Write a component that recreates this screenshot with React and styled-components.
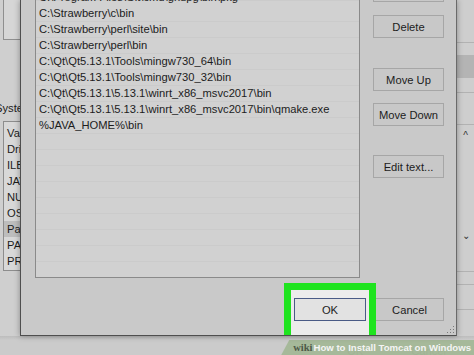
import React from "react";
import styled, { createGlobalStyle } from "styled-components";

const GlobalStyle = createGlobalStyle`
  html, body {
    margin: 0;
    padding: 0;
    overflow: hidden;
    background: #cdcdcd;
  }
  body {
    font-family: "Liberation Sans", Arial, sans-serif;
  }
`;

const Screen = styled.div`
  position: relative;
  width: 474px;
  height: 355px;
  overflow: hidden;
  display: flex;
  flex-direction: column;
  background: #cdcdcd;
  color: #1c1c1c;
  font-size: 11.2px;
`;

const Desk = styled.div`
  display: flex;
  height: 336px;
`;

const LeftPane = styled.div`
  width: 20px;
  flex: none;
  overflow: hidden;
  background: #cfcfcf;
  display: flex;
  flex-direction: column;
  padding-left: 3px;
  box-sizing: border-box;
`;

const TopBox = styled.div`
  height: 40px;
  width: 40px;
  flex: none;
  border-left: 1px solid #8f8f8f;
  border-bottom: 1px solid #8f8f8f;
  background: #d6d6d6;
  box-sizing: border-box;
`;

const SectionLabel = styled.div`
  margin: 59px 0 0 -8px;
  height: 18px;
  line-height: 18px;
  white-space: nowrap;
`;

const VarList = styled.div`
  margin-top: 4px;
  height: 150px;
  width: 60px;
  flex: none;
  border: 1px solid #8d8d8d;
  background: #d8d8d8;
  box-sizing: border-box;
  padding-top: 3px;
`;

const VarRow = styled.div`
  height: 16px;
  line-height: 16px;
  padding-left: 3px;
  white-space: nowrap;
  background: ${(p) => (p.selected ? "#bdbdbd" : "transparent")};
`;

const Dialog = styled.div`
  position: relative;
  z-index: 1;
  width: 437px;
  flex: none;
  display: flex;
  flex-direction: column;
  background: #c9c9c9;
  border-left: 1px solid #4e4e4e;
  border-right: 1px solid #6a6a6a;
  border-bottom: 1px solid #4e4e4e;
  box-sizing: border-box;
  box-shadow: 0 0 6px rgba(0, 0, 0, 0.35);
  overflow: hidden;
`;

const Body = styled.div`
  display: flex;
  gap: 13px;
  height: 278px;
  padding: 0 12px 0 14px;
`;

const PathList = styled.div`
  width: 325px;
  height: 278px;
  flex: none;
  overflow: hidden;
  box-sizing: border-box;
  border: 1px solid #8a8a8a;
  border-top: none;
  background-color: #d1d1d1;
  background-image: repeating-linear-gradient(
    to bottom,
    transparent 0,
    transparent 15px,
    #cbcbcb 15px,
    #cbcbcb 16px
  );
  background-position: 0 6px;
`;

const PathRows = styled.div`
  margin-top: -11px;
`;

const PathRow = styled.div`
  height: 16px;
  line-height: 16px;
  padding-left: 3px;
  white-space: nowrap;
`;

const ButtonColumn = styled.div`
  width: 71px;
  flex: none;
  display: flex;
  flex-direction: column;
  margin-top: -21px;
`;

const Button = styled.div`
  height: 23px;
  flex: none;
  box-sizing: border-box;
  display: flex;
  align-items: center;
  justify-content: center;
  margin-top: ${(p) => p.gap || 0}px;
  background: ${(p) => (p.primary ? "#e2e2e2" : "#c8c8c8")};
  border: 1px solid ${(p) => (p.primary ? "#4a5b86" : "#a6a6a6")};
  color: #1c1c1c;
  white-space: nowrap;
`;

const Footer = styled.div`
  display: flex;
  justify-content: flex-end;
  gap: 9px;
  padding: 20px 12px 0 0;
  height: 57px;
  box-sizing: border-box;
`;

const OkWrap = styled.div`
  position: relative;
  width: 72px;
`;

const Highlight = styled.div`
  position: absolute;
  left: -10px;
  top: -15px;
  right: -10px;
  bottom: -13px;
  border: 7px solid #1fe41f;
  background: #ececec;
`;

const OkButton = styled(Button)`
  position: relative;
`;

const FooterButton = styled(Button)`
  width: 69px;
`;

const Grip = styled.div`
  position: absolute;
  right: 2px;
  bottom: 2px;
  width: 8px;
  height: 8px;
  background-image: radial-gradient(#7a7a7a 0.8px, transparent 1px);
  background-size: 3px 3px;
  clip-path: polygon(100% 0, 100% 100%, 0 100%);
`;

const RightPane = styled.div`
  flex: 1;
  display: flex;
  flex-direction: column;
  background: #cecece;
  font-size: 10px;
  color: #333;
`;

const Band = styled.div`
  height: ${(p) => p.h}px;
  flex: none;
  background: ${(p) => p.bg || "transparent"};
  border-bottom: ${(p) => (p.line ? "1px solid #b2b2b2" : "none")};
  box-sizing: border-box;
  display: flex;
  align-items: center;
  justify-content: center;
`;

const BottomStrip = styled.div`
  flex: 1;
  display: flex;
  justify-content: flex-end;
  gap: 48px;
  padding: 9px 28px 0 0;
  background: linear-gradient(#bdbdbd, #cbcbcb 4px);
  color: #a3a3a3;
  overflow: hidden;
`;

const Watermark = styled.div`
  position: absolute;
  right: 0;
  bottom: 0;
  height: 15px;
  padding: 0 3px 0 12px;
  display: flex;
  align-items: center;
  background: rgba(160, 182, 146, 0.85);
  clip-path: polygon(8px 0, 100% 0, 100% 100%, 0 100%);
  font-size: 9.6px;
  font-weight: bold;
  color: #f4f4f4;
  white-space: nowrap;
`;

const WikiMark = styled.span`
  font-family: "Liberation Serif", "DejaVu Serif", serif;
  font-size: 10.5px;
  color: #4e5a48;
  margin-right: 1px;
`;

const paths = [
  "C:\\Program Files\\Git\\cmd\\gnupg\\bin\\pkg",
  "C:\\Strawberry\\c\\bin",
  "C:\\Strawberry\\perl\\site\\bin",
  "C:\\Strawberry\\perl\\bin",
  "C:\\Qt\\Qt5.13.1\\Tools\\mingw730_64\\bin",
  "C:\\Qt\\Qt5.13.1\\Tools\\mingw730_32\\bin",
  "C:\\Qt\\Qt5.13.1\\5.13.1\\winrt_x86_msvc2017\\bin",
  "C:\\Qt\\Qt5.13.1\\5.13.1\\winrt_x86_msvc2017\\bin\\qmake.exe",
  "%JAVA_HOME%\\bin",
];

const variables = [
  "Variable",
  "DriverData",
  "ILBMS",
  "JAVA_HOME",
  "NUMBER_OF_PROCESSORS",
  "OS",
  "Path",
  "PATHEXT",
  "PROCESSOR_ARCHITECTURE",
];

export default function App() {
  return (
    <>
      <GlobalStyle />
      <Screen>
        <Desk>
          <LeftPane>
            <TopBox />
            <SectionLabel>System variables</SectionLabel>
            <VarList>
              {variables.map((v) => (
                <VarRow key={v} selected={v === "Path"}>
                  {v}
                </VarRow>
              ))}
            </VarList>
          </LeftPane>

          <Dialog>
            <Body>
              <PathList>
                <PathRows>
                  {paths.map((p) => (
                    <PathRow key={p}>{p}</PathRow>
                  ))}
                </PathRows>
              </PathList>
              <ButtonColumn>
                <Button>Browse...</Button>
                <Button gap={13}>Delete</Button>
                <Button gap={30}>Move Up</Button>
                <Button gap={12}>Move Down</Button>
                <Button gap={29}>Edit text...</Button>
              </ButtonColumn>
            </Body>
            <Footer>
              <OkWrap>
                <Highlight />
                <OkButton primary>OK</OkButton>
              </OkWrap>
              <FooterButton>Cancel</FooterButton>
            </Footer>
            <Grip />
          </Dialog>

          <RightPane>
            <Band h={43} line />
            <Band h={12} />
            <Band h={23} bg="#b4b4b4" />
            <Band h={15} line />
            <Band h={32} line />
            <Band h={20}>^</Band>
            <Band h={62} bg="#cecece" />
            <Band h={57}>⌄</Band>
            <Band h={8} line />
            <Band h={13} line />
            <Band h={25} line />
            <Band h={26} />
          </RightPane>
        </Desk>
        <BottomStrip>
          <span>OK</span>
          <span>Cancel</span>
        </BottomStrip>
        <Watermark>
          <WikiMark>wiki</WikiMark>
          How to Install Tomcat on Windows
        </Watermark>
      </Screen>
    </>
  );
}
